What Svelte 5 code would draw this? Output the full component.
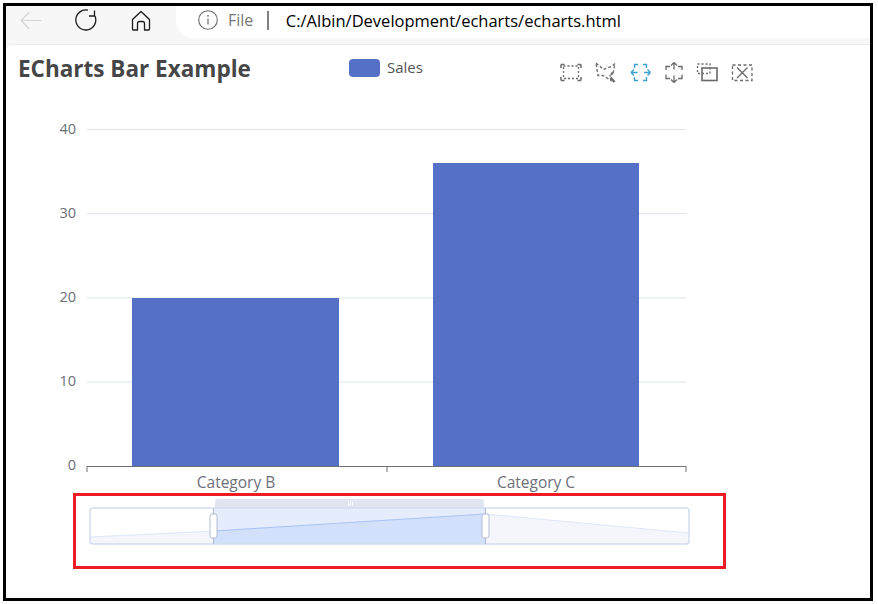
<script lang="ts">
    const ticks = [
        {label: "40", y: 129.5},
        {label: "30", y: 213.5},
        {label: "20", y: 298},
        {label: "10", y: 382},
        {label: "0", y: 466}
    ];
    const bars = [
        {name: "Category B", x: 132, w: 207, y: 298, mid: 236},
        {name: "Category C", x: 433, w: 206, y: 163, mid: 536}
    ];
    const axisTicks = [87, 387, 686];
</script>

<div class="frame">
    <header class="toolbar">
        <div class="nav">
            <svg class="nav-icons" width="170" height="32" viewBox="0 0 170 32" fill="none">
                <path d="M15 14.500h20M15 14.500l8.500-8.500M15 14.500l8.500 8.500" stroke="#d4d4d4" stroke-width="1.200"/>
                <path d="M89 10A10 10 0 1 1 82 4.200" stroke="#1c1c1c" stroke-width="1.300"/>
                <path d="M88.500 4.500V10H83" stroke="#1c1c1c" stroke-width="1.300"/>
                <path d="M126.500 23v-9.500l8.500-8 8.500 8V23a1 1 0 0 1-1 1h-4v-6.500a2 2 0 0 0-2-2h-3a2 2 0 0 0-2 2V24h-4a1 1 0 0 1-1-1z" stroke="#1c1c1c" stroke-width="1.300" stroke-linejoin="round"/>
            </svg>
        </div>
        <div class="address">
            <svg width="20" height="20" viewBox="0 0 20 20" fill="none">
                <circle cx="10" cy="10" r="9.300" stroke="#6b6b6b" stroke-width="1.100"/>
                <path d="M10 8.500v6" stroke="#6b6b6b" stroke-width="1.200"/>
                <circle cx="10" cy="5.800" r=".9" fill="#6b6b6b"/>
            </svg>
            <span class="scheme">File</span>
            <span class="sep"></span>
            <span class="url">C:/Albin/Development/echarts/echarts.html</span>
        </div>
    </header>

    <main class="page">
        <div class="head">
            <h1>ECharts Bar Example</h1>
            <div class="legend">
                <span class="swatch"></span>
                <span class="legend-label">Sales</span>
            </div>
            <svg class="tools" width="196" height="24" viewBox="0 0 196 24" fill="none" stroke="#6a6a6a" stroke-width="1.300">
                <!-- rect select -->
                <rect x="3.500" y="5" width="15" height="12.500" stroke-dasharray="2 2"/>
                <path d="M1 3.500h3.500M1 3.500V7M21 3.500h-3.500M21 3.500V7M1 19.500h3.500M1 19.500V16M21 19.500h-3.500M21 19.500V16" stroke-width="1.500"/>
                <!-- polygon select -->
                <path d="M36 2l7.500 6.500 8-3 3.500-3-2 10-3 2 1 5-8-5-5 0z" stroke-dasharray="3 2"/>
                <path d="M50.500 16.500l4 4.500" stroke-width="2.400"/>
                <circle cx="52" cy="12.500" r="1.300" fill="#6a6a6a" stroke="none"/>
                <!-- keep, horizontal -->
                <g stroke="#3f9fd0" stroke-width="1.400">
                    <path d="M78 3.500h-3.500V7M83 3.500h3.500V7M74.500 16v3.500H78M83 19.500h3.500V16"/>
                    <path d="M71 11.500h6.500M71 11.500l3-3M71 11.500l3 3M84 11.500h6.500M90.500 11.500l-3-3M90.500 11.500l-3 3"/>
                </g>
                <!-- keep, vertical -->
                <path d="M110 5.500h-4V9M118 5.500h4V9M106 13.500v4h4M118 17.500h4v-4"/>
                <path d="M114 1.500v7M114 1.500l-3 3M114 1.500l3 3M114 14.500v7M114 21.500l-3-3M114 21.500l3-3"/>
                <!-- clear selected -->
                <rect x="137.500" y="3" width="12.500" height="9.500" stroke-dasharray="2 2"/>
                <rect x="142" y="7" width="15" height="12.500" stroke-width="1.600"/>
                <!-- clear all -->
                <rect x="172.500" y="4" width="19.500" height="15.500" stroke-dasharray="3 2.500"/>
                <path d="M177 6.500l10.500 10.500M187.500 6.500L177 17"/>
            </svg>
        </div>

        <svg class="chart" width="864" height="508" viewBox="6 90 864 508" fill="none">
            {#each ticks as t}
                {#if t.label !== "0"}
                    <line x1="87" x2="686" y1={t.y} y2={t.y} stroke="#dfe3f2"/>
                {/if}
                <text x="76" y={t.y + 4} text-anchor="end" class="axis-y">{t.label}</text>
            {/each}

            {#each bars as b}
                <rect x={b.x} y={b.y} width={b.w} height={466 - b.y} fill="#5571c7"/>
                <text x={b.mid} y="488" text-anchor="middle" class="axis-x">{b.name}</text>
            {/each}

            <line x1="87" x2="686" y1="466.500" y2="466.500" stroke="#6e7079" stroke-width="1.200"/>
            {#each axisTicks as x}
                <line x1={x} x2={x} y1="466" y2="472" stroke="#6e7079"/>
            {/each}

            <!-- data zoom -->
            <path d="M215 508v-6a3 3 0 0 1 3-3h263a3 3 0 0 1 3 3v6z" fill="#e0e5f1"/>
            <path d="M348.500 501.500v4M350.500 501.500v4M352.500 501.500v4" stroke="#fff" stroke-width=".9"/>
            <rect x="214" y="508" width="271" height="36" fill="#e5ecfc"/>
            <path d="M90.500 537L214 531V544H93a3 3 0 0 1-3-3z" fill="#f4f6fb"/>
            <path d="M485 514L689 533V541a3 3 0 0 1-3 3H485z" fill="#f4f6fb"/>
            <path d="M214 531L485 514V544H214z" fill="#d2e0fb"/>
            <path d="M90.500 537L214 531M485 514L689 533" stroke="#dfe6f7"/>
            <path d="M214 531L485 514" stroke="#a9c2f6"/>
            <rect x="90" y="508" width="599" height="36" rx="3" stroke="#d4dcef" stroke-width="1.500"/>
            <path d="M213.500 508v36M485.500 508v36" stroke="#aeb8cf"/>
            <rect x="210" y="514" width="7" height="24" rx="2" fill="#fff" stroke="#b4bdd4"/>
            <rect x="482" y="514" width="7" height="24" rx="2" fill="#fff" stroke="#b4bdd4"/>

            <rect x="74.500" y="494.500" width="650" height="73" stroke="#ed1c24" stroke-width="3"/>
        </svg>
    </main>
</div>

<style>
    :global(body) {
        background: #fff;
    }

    .frame {
        box-sizing: border-box;
        width: 870px;
        height: 598px;
        margin: 3px 0 0 3px;
        border: 3px solid #000;
        background: #f7f7f7;
        display: flex;
        flex-direction: column;
        font-family: "Open Sans", "Noto Sans", sans-serif;
        overflow: hidden;
    }

    .toolbar {
        display: flex;
        height: 38px;
        flex: none;
    }

    .nav {
        width: 170px;
        flex: none;
    }

    .nav-icons {
        display: block;
    }

    .address {
        flex: 1;
        height: 28px;
        padding: 0 0 4px 22px;
        background: #fff;
        border-radius: 0 0 0 18px;
        display: flex;
        align-items: center;
    }

    .scheme {
        color: #777;
        font-size: 16px;
        margin-left: 10px;
    }

    .sep {
        width: 1.500px;
        height: 19px;
        background: #808080;
        margin: 0 17px 0 14px;
    }

    .url {
        color: #000;
        font-size: 16.500px;
    }

    .page {
        flex: 1;
        background: #fff;
        border-top: 1px solid #ececec;
        border-top-left-radius: 6px;
    }

    .head {
        display: flex;
        align-items: center;
        height: 45px;
        padding-left: 12px;
    }

    h1 {
        margin: 2px 0 0;
        width: 233px;
        font-size: 22.500px;
        font-weight: 700;
        color: #464646;
        white-space: nowrap;
    }

    .legend {
        display: flex;
        align-items: center;
        gap: 7px;
        margin-left: 98px;
        font-size: 15px;
        color: #555;
    }

    .legend-label {
        margin-bottom: 2px;
    }

    .swatch {
        width: 31px;
        height: 18px;
        border-radius: 4px;
        background: #5571c7;
    }

    .tools {
        margin-left: 137px;
        margin-top: 11px;
    }

    .chart {
        display: block;
    }

    .axis-y {
        font-size: 14.500px;
        fill: #6e7079;
    }

    .axis-x {
        font-size: 15.500px;
        fill: #6e7079;
    }
</style>
